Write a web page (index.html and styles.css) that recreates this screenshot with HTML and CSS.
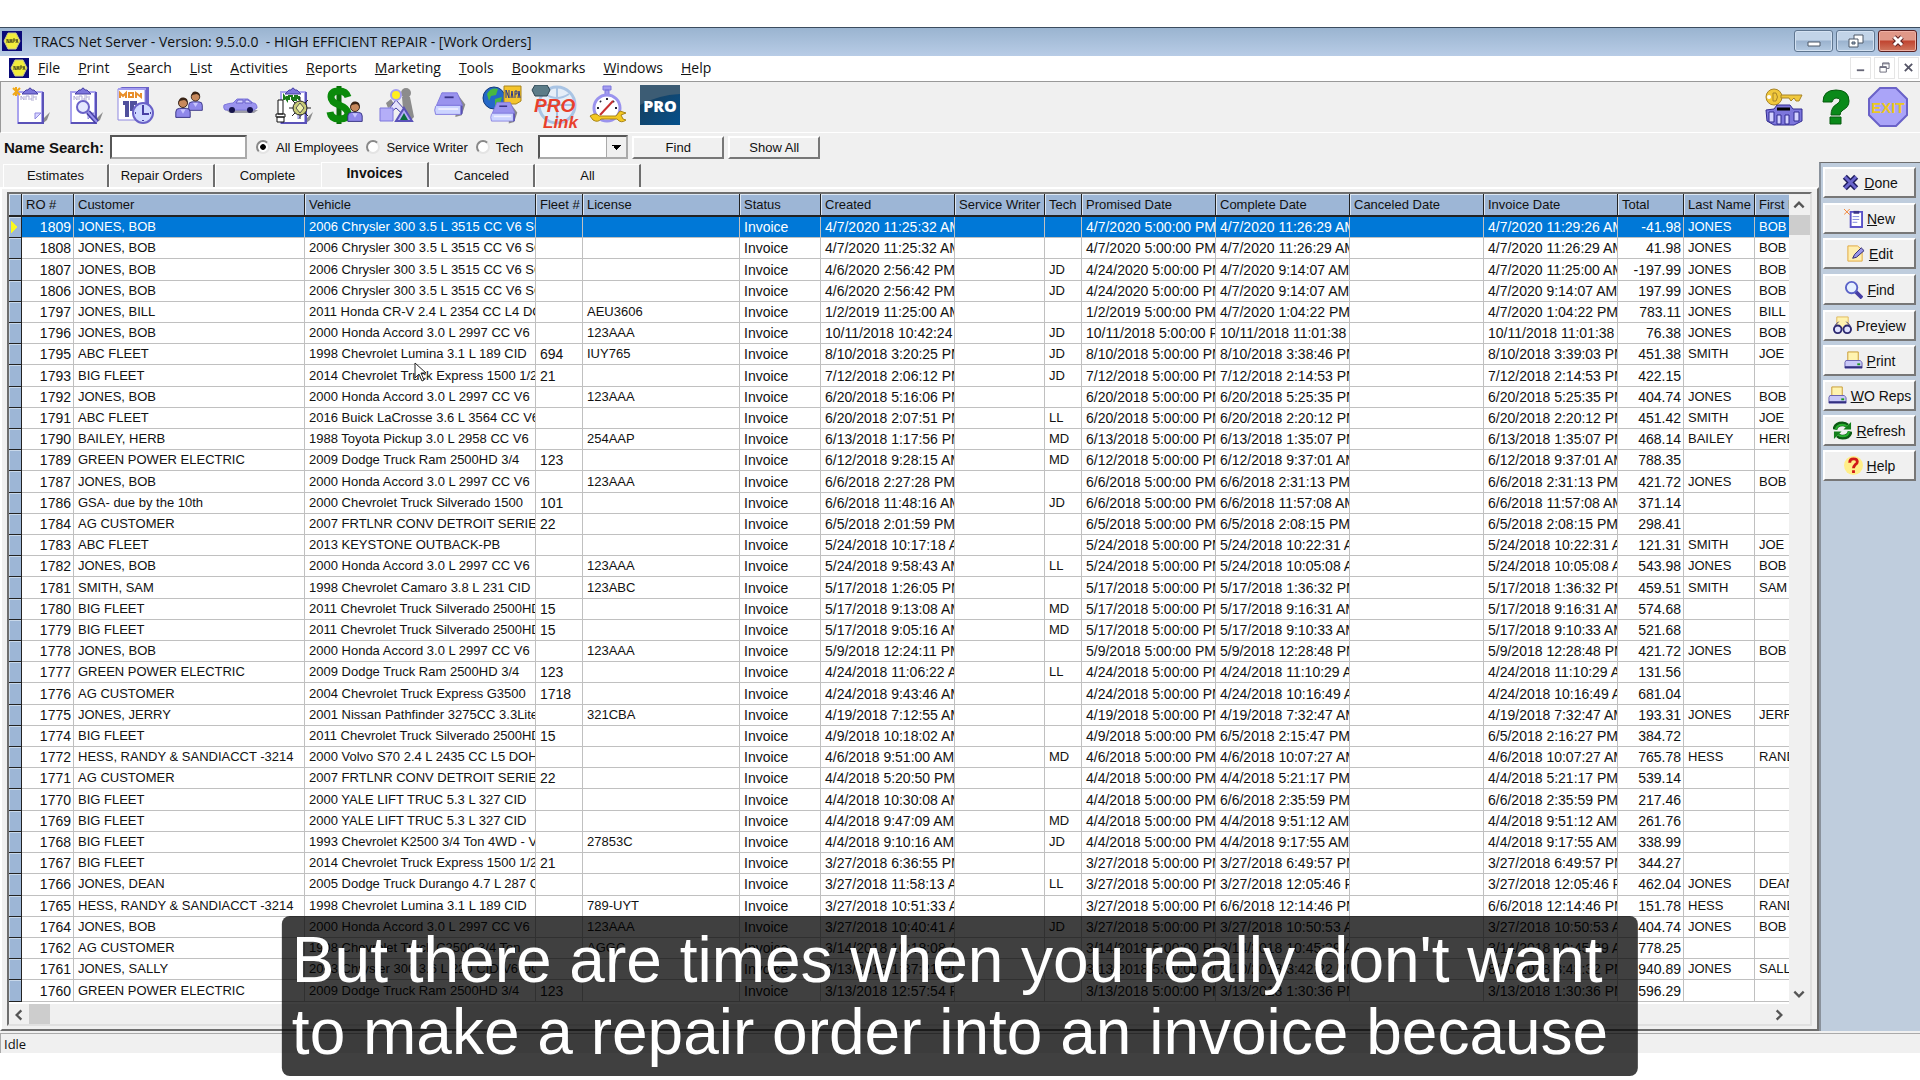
FILE: index.html
```html
<!DOCTYPE html>
<html lang="en">
<head>
  <meta charset="UTF-8" />
  <title>TRACS Net Server - Work Orders</title>
  <link rel="stylesheet" href="styles.css">
</head>
<body>
  <!-- shared icon parts -->
  <svg class="sprites" aria-hidden="true">
    <symbol id="napa" viewBox="0 0 20 20">
      <rect width="20" height="20" fill="#0a0a78"/>
      <path d="M6 2h8l4 8-4 8H6l-4-8z" fill="#f2ee3c" stroke="#c8c890"/>
      <path d="M5 12V8l2 4V8M8 12l1-4 1 4M11 12V8h2v2h-2M14 12l1-4 1 4" fill="none" stroke="#55551c"/>
    </symbol>
    <symbol id="clipboard" viewBox="0 0 40 40">
      <path d="M30 37l10-10-3 8-5 4z" fill="#8c8c8c"/>
      <path d="M8 7h24v31H8z" fill="#fff" stroke="#a9a3ee" stroke-width="2"/>
      <path d="M33 7v31H8" fill="none" stroke="#5a52b8" stroke-width="2"/>
      <path d="M12 9l4-4h2q2-4 4 0h2l4 4z" fill="#7d76dc" stroke="#463ea4"/>
      <path d="M11 15v-4l3 4v-4M16 15v-4h3v4M21 11h3v2h-3v2h3M26 11v4" fill="none" stroke="#b0acd4"/>
      <path d="M25 34v-6h6z" fill="#d8d6ff" stroke="#8f88e0"/>
    </symbol>
    <symbol id="person" viewBox="0 0 20 24">
      <path d="M2 23v-6q0-4 4-4h8q4 0 4 4v6z" fill="#8f88ea" stroke="#2e2a7c"/>
      <path d="M7 14h6l-3 5z" fill="#c9c6ff"/>
      <circle cx="10" cy="7" r="5" fill="#c8895c" stroke="#2b1a10"/>
      <path d="M5 6q1-6 6-5 5 1 4 6-2-4-5-3-3 0-5 2z" fill="#3a2415"/>
    </symbol>
    <symbol id="book" viewBox="0 0 40 32">
      <path d="M28 4l9 12-4 12-7 2z" fill="#8a8a8a"/>
      <path d="M11 3h17l6 14H5z" fill="#9a93ee" stroke="#7d76dc"/>
      <path d="M4 18q-2 4 0 9h28V17H5z" fill="#ccd4ff" stroke="#7d76dc"/>
      <path d="M32 17l2 1v8l-2 2z" fill="#5a52b8"/>
      <path d="M14 8h10" stroke="#3a3488" stroke-width="2"/>
      <path d="M7 21h22" stroke="#eef" stroke-width="2"/>
    </symbol>
    <symbol id="printer" viewBox="0 0 20 20">
      <path d="M4 1h11v9H4z" fill="#fff3b0" stroke="#c89a30"/>
      <path d="M2 10h15l2 2v6H1v-6z" fill="#c9c8f8" stroke="#6660b0"/>
      <path d="M1 17h18" stroke="#333080" stroke-width="2"/>
      <path d="M14 14h3" stroke="#1a9a1a" stroke-width="2"/>
    </symbol>
  </svg>

  <div class="app">
    <header class="titlebar">
      <svg class="app-icon"><use href="#napa"/></svg>
      <h1 class="title">TRACS Net Server - Version: 9.5.0.0&nbsp; - HIGH EFFICIENT REPAIR - [Work Orders]</h1>
      <div class="win-buttons">
        <button class="win-btn" aria-label="Minimize"><svg viewBox="0 0 16 14"><path d="M2 8h12v4H2z" fill="#fff" stroke="#4c5868"/></svg></button>
        <button class="win-btn" aria-label="Restore"><svg viewBox="0 0 16 14"><path d="M6 1h9v8H6z" fill="#fff" stroke="#4c5868"/><path d="M1 5h9v8H1z" fill="#fff" stroke="#4c5868"/><path d="M4 8h3v2H4z" fill="#9fb4cc" stroke="#4c5868"/></svg></button>
        <button class="win-btn win-close" aria-label="Close"><svg viewBox="0 0 16 14"><path d="M4 3l8 8M12 3l-8 8" stroke="#5c2020" stroke-width="5"/><path d="M4 3l8 8M12 3l-8 8" stroke="#fff" stroke-width="3"/></svg></button>
      </div>
    </header>

    <nav class="menubar">
      <svg class="app-icon"><use href="#napa"/></svg>
      <a href="#"><u>F</u>ile</a>
      <a href="#"><u>P</u>rint</a>
      <a href="#"><u>S</u>earch</a>
      <a href="#"><u>L</u>ist</a>
      <a href="#"><u>A</u>ctivities</a>
      <a href="#"><u>R</u>eports</a>
      <a href="#"><u>M</u>arketing</a>
      <a href="#"><u>T</u>ools</a>
      <a href="#"><u>B</u>ookmarks</a>
      <a href="#"><u>W</u>indows</a>
      <a href="#"><u>H</u>elp</a>
      <div class="mdi-buttons">
        <button aria-label="Minimize window"><svg viewBox="0 0 12 12"><path d="M2 9h8" stroke="#667" stroke-width="2"/></svg></button>
        <button aria-label="Restore window"><svg viewBox="0 0 12 12"><path d="M4 5V1h7v6H8M1 5h7v6H1zM1 6h7M4 2h7" fill="none" stroke="#667"/></svg></button>
        <button aria-label="Close window"><svg viewBox="0 0 12 12"><path d="M2 2l8 8M10 2l-8 8" stroke="#556" stroke-width="2"/></svg></button>
      </div>
    </nav>

    <div class="toolbar">
      <div class="tools">
        <button aria-label="New work order"><svg viewBox="0 0 40 40"><use href="#clipboard"/><path d="M3 3l7 7M10 3l-7 7M6 2v9" stroke="#f0a818" stroke-width="2"/></svg></button>
        <button aria-label="Find work order"><svg viewBox="0 0 40 40"><use href="#clipboard"/><path d="M25 27l9 10" stroke="#463ea4" stroke-width="5"/><path d="M25 27l9 10" stroke="#9a93ee" stroke-width="2"/><circle cx="20" cy="22" r="6" fill="#e4e8ff" stroke="#6a62c8" stroke-width="2"/></svg></button>
        <button aria-label="Schedule"><svg viewBox="0 0 40 40">
          <path d="M3 4l4-2h27v29l-4 4z" fill="#6a62c8"/><path d="M3 4h27v31H3z" fill="#fff" stroke="#8f88e0"/>
          <path d="M3 3h28v2H3z" fill="#a49df0"/>
          <path d="M5 13V8l3 3 3-3v5M14 8h4v4h-4zM21 13V8l5 4V8" fill="none" stroke="#e8902c" stroke-width="2"/>
          <path d="M8 18h4v14M22 18h-5v6h4" fill="none" stroke="#50509c" stroke-width="4"/>
          <circle cx="28" cy="28" r="10" fill="#cfd8ff" stroke="#6a62c8" stroke-width="2"/>
          <path d="M28 21v8h6M28 20v1M28 35v1M20 28h1M35 28h1" fill="none" stroke="#463ea4" stroke-width="2"/></svg></button>
        <button aria-label="Customers"><svg viewBox="0 0 40 40"><use href="#person" x="19" y="5" width="17" height="22"/><use href="#person" x="6" y="11" width="18" height="23"/></svg></button>
        <button aria-label="Vehicles"><svg viewBox="0 0 40 40"><path d="M6 25h32l-4 3H10z" fill="#9c9ca8"/><path d="M4 20q5-2 9-2l4-4h11l5 4q4 0 4 5l-3 2H5q-2-2-1-5z" fill="#9a93ee" stroke="#7d76dc"/><path d="M16 18l2-3h5v3zM25 15h3l4 3h-7z" fill="#d4d2ff" stroke="#6a62c8"/><circle cx="12" cy="25" r="3" fill="#16144a"/><circle cx="30" cy="25" r="3" fill="#16144a"/></svg></button>
        <button aria-label="Parts and labor"><svg viewBox="0 0 40 40"><use href="#clipboard"/><path d="M11 15v-4l3 4v-4M16 15v-4h3v4M21 11h3v2h-3v2h3M26 11v4" fill="none" stroke="#1a7a1a" stroke-width="2"/>
          <path d="M5 15h5v14H5zM3 29h9v3H3zM4 32h7v5H4z" fill="#fff" stroke="#111"/>
          <path d="M27 12v22M16 23h22M19 15l16 16M35 15L19 31" stroke="#222"/><circle cx="27" cy="23" r="7" fill="#c9cc78" stroke="#222"/><path d="M27 18l4 5-4 5-4-5z" fill="#eef0a8" stroke="#555"/></svg></button>
        <button aria-label="Accounts receivable"><svg viewBox="0 0 40 40"><path d="M14 1v38" stroke="#0a6e0a" stroke-width="5"/><path d="M23 12q-2-6-9-6-8 0-8 6 0 5 8 8t9 8q0 6-9 6-8 0-9-7" fill="none" stroke="#0a8a0a" stroke-width="7"/><use href="#person" x="21" y="15" width="18" height="23"/></svg></button>
        <button aria-label="Inventory"><svg viewBox="0 0 40 40"><circle cx="29" cy="8" r="5" fill="#8c8c8c"/><path d="M25 12h8l4 20-4 4-7-12z" fill="#8c8c8c"/><path d="M9 18l5-4 3 5-6 4z" fill="#8c8c8c"/><path d="M19 15l9 10 4 10-13-12-6 5-1-4z" fill="#e4e2fa" stroke="#463ea4"/><circle cx="19" cy="10" r="5" fill="#ffee20" stroke="#a49df0" stroke-width="2"/><path d="M3 23h13v13H3z" fill="#b4aef8" stroke="#7d76dc"/><path d="M27 23l8 13H19z" fill="#b4aef8" stroke="#5a52b8" stroke-width="2"/><path d="M27 28l4 7h-8z" fill="#0a6e3a"/></svg></button>
        <button aria-label="Catalog"><svg viewBox="0 0 40 40"><use href="#book" x="2" y="5" width="36" height="29"/></svg></button>
        <button aria-label="NAPA online catalog"><svg viewBox="0 0 40 40"><circle cx="12" cy="13" r="11" fill="#2468c8" stroke="#123a78"/><path d="M5 9q4-7 11-5l-2 6-5 1-2 5zM13 14l7-2-2 7-5 3z" fill="#48b840"/><path d="M22 1h17v15l-5 3H22z" fill="#f4c42c" stroke="#a8841c"/><path d="M24 13V5l3 8V5M29 13l1-7 1 7M33 13V6h2v3h-2M36 13l1-7 1 7" fill="none" stroke="#28368c"/><use href="#book" x="5" y="15" width="34" height="25"/></svg></button>
        <button aria-label="PROLink"><svg class="wide" viewBox="0 0 48 44"><circle cx="26" cy="20" r="18" fill="#e6eef8" stroke="#a9c4e4" stroke-width="3"/><path d="M26 3v34M8 20h36M14 9q12 8 24 0" fill="none" stroke="#a9c4e4" stroke-width="2"/><path d="M4 0h12l3 5-3 6H4L1 5z" fill="#5c7c88" stroke="#2c4450"/><text x="3" y="27" class="logo-pro">PRO</text><text x="12" y="43" class="logo-link">Link</text></svg></button>
        <button aria-label="Time clock"><svg viewBox="0 0 40 40"><path d="M16 1h8v4h-8zM18 5h4v5h-4z" fill="#a49df0" stroke="#7d76dc"/><circle cx="20" cy="23" r="13" fill="#fff" stroke="#9a93ee" stroke-width="3"/><path d="M20 13v2M20 31v2M10 23h2M28 23h2M13 16l1 1M27 16l-1 1" stroke="#223" stroke-width="2"/><path d="M13 30l13-14" stroke="#c83030" stroke-width="2"/><path d="M3 31q6-4 9 0h17l4-5 6 2-5 2 2 4 3 1q-5 4-9-1H14q-3 4-8 1z" fill="#f4c820" stroke="#a88418"/></svg></button>
        <button aria-label="PRO"><svg viewBox="0 0 40 40"><defs><linearGradient id="proBg" x1="0" y1="0" x2="1" y2="1"><stop offset="0" stop-color="#1d3c54"/><stop offset="1" stop-color="#04508c"/></linearGradient></defs><rect width="40" height="40" fill="url(#proBg)"/><path d="M0 0h40v9Q18 10 0 20z" fill="#3c5c74"/><text x="20" y="27" class="logo-badge">PRO</text></svg></button>
      </div>
      <div class="tools-right">
        <button aria-label="Security"><svg viewBox="0 0 40 40"><circle cx="10" cy="10" r="8" fill="#f0c83c" stroke="#a88428"/><path d="M17 8h21l-3 6h-3l-2-3-3 3-2-3h-8z" fill="#f0c83c" stroke="#a88428"/><circle cx="5" cy="10" r="2" fill="#fff"/><path d="M9 6v8h3q3-4 0-8z" fill="none" stroke="#a88428"/><path d="M2 23l8-1 3-4h13l3 4h9v12l-8 4H10l-7-4z" fill="#7d76dc" stroke="#312a90"/><path d="M5 25h5v10H5zM13 28h4v9h-4zM21 28h4v9h-4zM30 25h5v9h-5z" fill="#d4d2ff" stroke="#312a90"/><path d="M13 22h13" stroke="#000" stroke-width="3"/></svg></button>
        <button aria-label="Help"><svg viewBox="0 0 40 40"><path d="M7 15Q7 3 20 3t13 11q0 6-6 9-3 2-3 5h-9q0-8 6-11 3-2 3-4 0-2-4-2-3 0-4 4zM14 30h11v7H14z" fill="#0a8a1a" stroke="#045a0c"/></svg></button>
        <button aria-label="Exit"><svg viewBox="0 0 40 40"><path d="M12 1h16l11 11v16L28 39H12L1 28V12z" fill="#aaa4f8" stroke="#6a62c8" stroke-width="2"/><text x="20" y="26" class="logo-exit">EXIT</text></svg></button>
      </div>
    </div>

    <form class="search" onsubmit="return false">
      <label class="search-label" for="nameSearch">Name Search:</label>
      <input class="search-box" type="text" id="nameSearch" />
      <label class="choice"><input type="radio" name="who" checked /> All Employees</label>
      <label class="choice"><input type="radio" name="who" /> Service Writer</label>
      <label class="choice"><input type="radio" name="who" /> Tech</label>
      <select class="employee" aria-label="Employee"><option></option></select>
      <button class="btn">Find</button>
      <button class="btn">Show All</button>
    </form>

    <div class="work">
      <main class="content">
        <div class="tabs">
          <button class="tab">Estimates</button>
          <button class="tab">Repair Orders</button>
          <button class="tab">Complete</button>
          <button class="tab active">Invoices</button>
          <button class="tab">Canceled</button>
          <button class="tab">All</button>
        </div>
        <div class="panel">
          <div class="grid">
            <div class="grid-body">
              <table>
                <colgroup>
                  <col class="c-mark"><col class="c-ro"><col class="c-customer"><col class="c-vehicle"><col class="c-fleet"><col class="c-license"><col class="c-status"><col class="c-date"><col class="c-writer"><col class="c-tech"><col class="c-date"><col class="c-date"><col class="c-date"><col class="c-date"><col class="c-total"><col class="c-last"><col>
                </colgroup>
                <thead>
                  <tr>
                    <th></th><th>RO #</th><th>Customer</th><th>Vehicle</th><th>Fleet #</th><th>License</th><th>Status</th><th>Created</th><th>Service Writer</th><th>Tech</th><th>Promised Date</th><th>Complete Date</th><th>Canceled Date</th><th>Invoice Date</th><th>Total</th><th>Last Name</th><th>First Name</th>
                  </tr>
                </thead>
                <tbody id="orders"></tbody>
              </table>
            </div>
            <div class="vscroll">
              <button aria-label="Scroll up"><svg viewBox="0 0 12 12"><path d="M2 8l4-4 4 4" fill="none" stroke="#555" stroke-width="2"/></svg></button>
              <div class="thumb"></div>
              <button class="scroll-end" aria-label="Scroll down"><svg viewBox="0 0 12 12"><path d="M2 4l4 4 4-4" fill="none" stroke="#555" stroke-width="2"/></svg></button>
            </div>
            <div class="hscroll">
              <button aria-label="Scroll left"><svg viewBox="0 0 12 12"><path d="M8 2L4 6l4 4" fill="none" stroke="#555" stroke-width="2"/></svg></button>
              <div class="thumb"></div>
              <button class="scroll-end" aria-label="Scroll right"><svg viewBox="0 0 12 12"><path d="M4 2l4 4-4 4" fill="none" stroke="#555" stroke-width="2"/></svg></button>
            </div>
          </div>
        </div>
      </main>

      <aside class="side">
        <div class="side-group">
          <button><svg viewBox="0 0 20 20"><path d="M4 4l12 12M16 4L4 16" stroke="#1c1a5c" stroke-width="6"/><path d="M4 4l12 12M16 4L4 16" stroke="#6b66cc" stroke-width="3"/></svg><span><u>D</u>one</span></button>
        </div>
        <div class="side-group">
          <button><svg viewBox="0 0 20 20"><path d="M7 3h12v16H7z" fill="#fff" stroke="#5a52c8" stroke-width="2"/><path d="M10 2h6v3h-6z" fill="#3a3488"/><path d="M9 8h7M9 11h7M9 14h5" stroke="#7d86dc"/><path d="M0 0l6 6M6 0L0 6" stroke="#f08030"/></svg><span><u>N</u>ew</span></button>
          <button><svg viewBox="0 0 20 20"><path d="M2 2h10l5 4v12H2z" fill="#ffeeb0" stroke="#e0a83c"/><path d="M7 15l2-4 7-7 3 3-8 7z" fill="#9a96e8" stroke="#2c2870"/></svg><span><u>E</u>dit</span></button>
        </div>
        <div class="side-group">
          <button><svg viewBox="0 0 20 20"><path d="M12 12l7 7" stroke="#463ea4" stroke-width="4"/><circle cx="8" cy="8" r="6" fill="#e6f0ff" stroke="#5a62c8" stroke-width="2"/></svg><span><u>F</u>ind</span></button>
        </div>
        <div class="side-group">
          <button><svg viewBox="0 0 20 20"><path d="M4 1h12v12H4z" fill="#fff3b0" stroke="#e0b85c"/><circle cx="5" cy="14" r="4" fill="#dfe2ff" stroke="#2c2870" stroke-width="2"/><circle cx="15" cy="14" r="4" fill="#dfe2ff" stroke="#2c2870" stroke-width="2"/><path d="M2 10l4-4M18 10l-4-4" stroke="#2c2870"/></svg><span>Pre<u>v</u>iew</span></button>
          <button><svg viewBox="0 0 20 20"><use href="#printer"/></svg><span><u>P</u>rint</span></button>
          <button><svg viewBox="0 0 20 20"><use href="#printer"/></svg><span><u>W</u>O Reps</span></button>
          <button><svg viewBox="0 0 20 20"><path d="M2 9q1-6 8-6 3 0 5 2M18 11q-1 6-8 6-3 0-5-2" fill="none" stroke="#0c5a14" stroke-width="5"/><path d="M3 9q1-5 7-5 3 0 5 2M17 11q-1 5-7 5-3 0-5-2" fill="none" stroke="#28b030" stroke-width="2"/><path d="M19 1v8h-8zM1 19v-8h8z" fill="#14801c"/></svg><span><u>R</u>efresh</span></button>
          <button><svg viewBox="0 0 20 20"><circle cx="10" cy="10" r="10" fill="#ffee88"/><path d="M6 7q0-4 4-4t4 3q0 2-2 3-2 2-2 4M10 15v3" fill="none" stroke="#d01818" stroke-width="3"/></svg><span><u>H</u>elp</span></button>
        </div>
      </aside>
    </div>

    <footer class="statusbar">Idle</footer>
  </div>

  <svg class="pointer" viewBox="0 0 12 20"><path d="M1 1v15l4-4 3 7 2-1-3-7h5z" fill="#fff" stroke="#222"/></svg>
  <p class="caption">But there are times when you really don't want<br>to make a repair order into an invoice because</p>

  <script>
    // ro, customer, vehicle, fleet, license, created, tech, promised, complete, invoiced, total, last, first
    const orders = [
      [1809, 'JONES, BOB', '2006 Chrysler 300 3.5 L 3515 CC V6 SOHC', '', '', '4/7/2020 11:25:32 AM', '', '4/7/2020', '4/7/2020 11:26:29 AM', '4/7/2020 11:29:26 AM', '-41.98', 'JONES', 'BOB'],
      [1808, 'JONES, BOB', '2006 Chrysler 300 3.5 L 3515 CC V6 SOHC', '', '', '4/7/2020 11:25:32 AM', '', '4/7/2020', '4/7/2020 11:26:29 AM', '4/7/2020 11:26:29 AM', '41.98', 'JONES', 'BOB'],
      [1807, 'JONES, BOB', '2006 Chrysler 300 3.5 L 3515 CC V6 SOHC', '', '', '4/6/2020 2:56:42 PM', 'JD', '4/24/2020', '4/7/2020 9:14:07 AM', '4/7/2020 11:25:00 AM', '-197.99', 'JONES', 'BOB'],
      [1806, 'JONES, BOB', '2006 Chrysler 300 3.5 L 3515 CC V6 SOHC', '', '', '4/6/2020 2:56:42 PM', 'JD', '4/24/2020', '4/7/2020 9:14:07 AM', '4/7/2020 9:14:07 AM', '197.99', 'JONES', 'BOB'],
      [1797, 'JONES, BILL', '2011 Honda CR-V 2.4 L 2354 CC L4 DOHC', '', 'AEU3606', '1/2/2019 11:25:00 AM', '', '1/2/2019', '4/7/2020 1:04:22 PM', '4/7/2020 1:04:22 PM', '783.11', 'JONES', 'BILL'],
      [1796, 'JONES, BOB', '2000 Honda Accord 3.0 L 2997 CC V6', '', '123AAA', '10/11/2018 10:42:24 AM', 'JD', '10/11/2018', '10/11/2018 11:01:38 AM', '10/11/2018 11:01:38 AM', '76.38', 'JONES', 'BOB'],
      [1795, 'ABC FLEET', '1998 Chevrolet Lumina 3.1 L 189 CID', '694', 'IUY765', '8/10/2018 3:20:25 PM', 'JD', '8/10/2018', '8/10/2018 3:38:46 PM', '8/10/2018 3:39:03 PM', '451.38', 'SMITH', 'JOE'],
      [1793, 'BIG FLEET', '2014 Chevrolet Truck Express 1500 1/2', '21', '', '7/12/2018 2:06:12 PM', 'JD', '7/12/2018', '7/12/2018 2:14:53 PM', '7/12/2018 2:14:53 PM', '422.15', '', ''],
      [1792, 'JONES, BOB', '2000 Honda Accord 3.0 L 2997 CC V6', '', '123AAA', '6/20/2018 5:16:06 PM', '', '6/20/2018', '6/20/2018 5:25:35 PM', '6/20/2018 5:25:35 PM', '404.74', 'JONES', 'BOB'],
      [1791, 'ABC FLEET', '2016 Buick LaCrosse 3.6 L 3564 CC V6', '', '', '6/20/2018 2:07:51 PM', 'LL', '6/20/2018', '6/20/2018 2:20:12 PM', '6/20/2018 2:20:12 PM', '451.42', 'SMITH', 'JOE'],
      [1790, 'BAILEY, HERB', '1988 Toyota Pickup 3.0 L 2958 CC V6', '', '254AAP', '6/13/2018 1:17:56 PM', 'MD', '6/13/2018', '6/13/2018 1:35:07 PM', '6/13/2018 1:35:07 PM', '468.14', 'BAILEY', 'HERB'],
      [1789, 'GREEN POWER ELECTRIC', '2009 Dodge Truck Ram 2500HD 3/4', '123', '', '6/12/2018 9:28:15 AM', 'MD', '6/12/2018', '6/12/2018 9:37:01 AM', '6/12/2018 9:37:01 AM', '788.35', '', ''],
      [1787, 'JONES, BOB', '2000 Honda Accord 3.0 L 2997 CC V6', '', '123AAA', '6/6/2018 2:27:28 PM', '', '6/6/2018', '6/6/2018 2:31:13 PM', '6/6/2018 2:31:13 PM', '421.72', 'JONES', 'BOB'],
      [1786, 'GSA- due by the 10th', '2000 Chevrolet Truck Silverado 1500', '101', '', '6/6/2018 11:48:16 AM', 'JD', '6/6/2018', '6/6/2018 11:57:08 AM', '6/6/2018 11:57:08 AM', '371.14', '', ''],
      [1784, 'AG CUSTOMER', '2007 FRTLNR CONV DETROIT SERIES', '22', '', '6/5/2018 2:01:59 PM', '', '6/5/2018', '6/5/2018 2:08:15 PM', '6/5/2018 2:08:15 PM', '298.41', '', ''],
      [1783, 'ABC FLEET', '2013 KEYSTONE OUTBACK-PB', '', '', '5/24/2018 10:17:18 AM', '', '5/24/2018', '5/24/2018 10:22:31 AM', '5/24/2018 10:22:31 AM', '121.31', 'SMITH', 'JOE'],
      [1782, 'JONES, BOB', '2000 Honda Accord 3.0 L 2997 CC V6', '', '123AAA', '5/24/2018 9:58:43 AM', 'LL', '5/24/2018', '5/24/2018 10:05:08 AM', '5/24/2018 10:05:08 AM', '543.98', 'JONES', 'BOB'],
      [1781, 'SMITH, SAM', '1998 Chevrolet Camaro 3.8 L 231 CID', '', '123ABC', '5/17/2018 1:26:05 PM', '', '5/17/2018', '5/17/2018 1:36:32 PM', '5/17/2018 1:36:32 PM', '459.51', 'SMITH', 'SAM'],
      [1780, 'BIG FLEET', '2011 Chevrolet Truck Silverado 2500HD', '15', '', '5/17/2018 9:13:08 AM', 'MD', '5/17/2018', '5/17/2018 9:16:31 AM', '5/17/2018 9:16:31 AM', '574.68', '', ''],
      [1779, 'BIG FLEET', '2011 Chevrolet Truck Silverado 2500HD', '15', '', '5/17/2018 9:05:16 AM', 'MD', '5/17/2018', '5/17/2018 9:10:33 AM', '5/17/2018 9:10:33 AM', '521.68', '', ''],
      [1778, 'JONES, BOB', '2000 Honda Accord 3.0 L 2997 CC V6', '', '123AAA', '5/9/2018 12:24:11 PM', '', '5/9/2018', '5/9/2018 12:28:48 PM', '5/9/2018 12:28:48 PM', '421.72', 'JONES', 'BOB'],
      [1777, 'GREEN POWER ELECTRIC', '2009 Dodge Truck Ram 2500HD 3/4', '123', '', '4/24/2018 11:06:22 AM', 'LL', '4/24/2018', '4/24/2018 11:10:29 AM', '4/24/2018 11:10:29 AM', '131.56', '', ''],
      [1776, 'AG CUSTOMER', '2004 Chevrolet Truck Express G3500', '1718', '', '4/24/2018 9:43:46 AM', '', '4/24/2018', '4/24/2018 10:16:49 AM', '4/24/2018 10:16:49 AM', '681.04', '', ''],
      [1775, 'JONES, JERRY', '2001 Nissan Pathfinder 3275CC 3.3Liter', '', '321CBA', '4/19/2018 7:12:55 AM', '', '4/19/2018', '4/19/2018 7:32:47 AM', '4/19/2018 7:32:47 AM', '193.31', 'JONES', 'JERRY'],
      [1774, 'BIG FLEET', '2011 Chevrolet Truck Silverado 2500HD', '15', '', '4/9/2018 10:18:02 AM', '', '4/9/2018', '6/5/2018 2:15:47 PM', '6/5/2018 2:16:27 PM', '384.72', '', ''],
      [1772, 'HESS, RANDY & SANDIACCT -3214', '2000 Volvo S70 2.4 L 2435 CC L5 DOHC', '', '', '4/6/2018 9:51:00 AM', 'MD', '4/6/2018', '4/6/2018 10:07:27 AM', '4/6/2018 10:07:27 AM', '765.78', 'HESS', 'RANDY'],
      [1771, 'AG CUSTOMER', '2007 FRTLNR CONV DETROIT SERIES', '22', '', '4/4/2018 5:20:50 PM', '', '4/4/2018', '4/4/2018 5:21:17 PM', '4/4/2018 5:21:17 PM', '539.14', '', ''],
      [1770, 'BIG FLEET', '2000 YALE LIFT TRUC 5.3 L 327 CID', '', '', '4/4/2018 10:30:08 AM', '', '4/4/2018', '6/6/2018 2:35:59 PM', '6/6/2018 2:35:59 PM', '217.46', '', ''],
      [1769, 'BIG FLEET', '2000 YALE LIFT TRUC 5.3 L 327 CID', '', '', '4/4/2018 9:47:09 AM', 'MD', '4/4/2018', '4/4/2018 9:51:12 AM', '4/4/2018 9:51:12 AM', '261.76', '', ''],
      [1768, 'BIG FLEET', '1993 Chevrolet K2500 3/4 Ton 4WD - V8', '', '27853C', '4/4/2018 9:10:16 AM', 'JD', '4/4/2018', '4/4/2018 9:17:55 AM', '4/4/2018 9:17:55 AM', '338.99', '', ''],
      [1767, 'BIG FLEET', '2014 Chevrolet Truck Express 1500 1/2', '21', '', '3/27/2018 6:36:55 PM', '', '3/27/2018', '3/27/2018 6:49:57 PM', '3/27/2018 6:49:57 PM', '344.27', '', ''],
      [1766, 'JONES, DEAN', '2005 Dodge Truck Durango 4.7 L 287 CID', '', '', '3/27/2018 11:58:13 AM', 'LL', '3/27/2018', '3/27/2018 12:05:46 PM', '3/27/2018 12:05:46 PM', '462.04', 'JONES', 'DEAN'],
      [1765, 'HESS, RANDY & SANDIACCT -3214', '1998 Chevrolet Lumina 3.1 L 189 CID', '', '789-UYT', '3/27/2018 10:51:33 AM', '', '3/27/2018', '6/6/2018 12:14:46 PM', '6/6/2018 12:14:46 PM', '151.78', 'HESS', 'RANDY'],
      [1764, 'JONES, BOB', '2000 Honda Accord 3.0 L 2997 CC V6', '', '123AAA', '3/27/2018 10:40:41 AM', 'JD', '3/27/2018', '3/27/2018 10:50:53 AM', '3/27/2018 10:50:53 AM', '404.74', 'JONES', 'BOB'],
      [1762, 'AG CUSTOMER', '1998 Chevrolet Truck C2500 3/4 Ton', '', 'AGGC', '3/14/2018 10:18:08 AM', '', '3/14/2018', '3/14/2018 10:45:39 AM', '3/14/2018 10:45:39 AM', '778.25', '', ''],
      [1761, 'JONES, SALLY', '2013 Chrysler 300 3.6 L 220 CID V6 DOHC', '', '', '3/13/2018 1:37:21 PM', '', '3/13/2018', '8/10/2018 3:42:22 PM', '8/10/2018 3:42:32 PM', '940.89', 'JONES', 'SALLY'],
      [1760, 'GREEN POWER ELECTRIC', '2009 Dodge Truck Ram 2500HD 3/4', '123', '', '3/13/2018 12:57:54 PM', '', '3/13/2018', '3/13/2018 1:30:36 PM', '3/13/2018 1:30:36 PM', '596.29', '', '']
    ];

    const tbody = document.getElementById('orders');
    orders.forEach((o, i) => {
      const [ro, customer, vehicle, fleet, license, created, tech, promised, complete, invoiced, total, last, first] = o;
      const row = document.createElement('tr');
      if (i === 0) row.className = 'selected';
      row.innerHTML = `
        <td class="mark"></td>
        <td class="num">${ro}</td>
        <td class="name">${customer.replace('&', '&amp;')}</td>
        <td class="name">${vehicle}</td>
        <td>${fleet}</td>
        <td class="name">${license}</td>
        <td>Invoice</td>
        <td>${created}</td>
        <td></td>
        <td class="name">${tech}</td>
        <td>${promised} 5:00:00 PM</td>
        <td>${complete}</td>
        <td></td>
        <td>${invoiced}</td>
        <td class="num">${total}</td>
        <td class="name">${last}</td>
        <td class="name">${first}</td>
      `;
      tbody.appendChild(row);
    });
  </script>
</body>
</html>
```

FILE: styles.css
```css
:root {
  --face: #f0f0f0;
  --header-blue: #9db6d6;
  --side-blue: #bfcddd;
  --select: #0078d7;
  --line: #c0c0c0;
  --dark: #6e6e6e;
}
* {
  box-sizing: border-box;
}
body {
  margin: 0;
  height: 100vh;
  padding: 27px 0;
  display: flex;
  background: white;
  color: #111;
  font-family: "Liberation Sans", Arial, sans-serif;
  font-size: 13px;
}
button, input, select {
  font: inherit;
  color: inherit;
}
button {
  padding: 0;
  border: none;
  background: none;
}
.sprites {
  position: absolute;
  width: 0;
  height: 0;
}
.app {
  flex: 1;
  min-width: 0;
  display: flex;
  flex-direction: column;
  background: var(--face);
}

/* title and menu */
.titlebar {
  height: 29px;
  display: flex;
  align-items: center;
  gap: 11px;
  padding: 0 3px 2px 2px;
  border-top: 1px solid #3c4c5e;
  background: linear-gradient(#9ab4d0, #b8cce6);
}
.app-icon {
  width: 20px;
  height: 20px;
}
.title {
  margin: 0;
  font: 14px "Open Sans", sans-serif;
}
.win-buttons {
  margin-left: auto;
  display: flex;
  gap: 3px;
}
.win-btn {
  width: 39px;
  height: 22px;
  display: flex;
  align-items: center;
  justify-content: center;
  border: 1px solid #5f7690;
  border-radius: 3px;
  box-shadow: inset 0 0 0 1px #d4e2f2;
  background: linear-gradient(#c2d4e8 45%, #9ab2ce 50%, #b4cae2);
}
.win-btn svg {
  width: 16px;
  height: 14px;
}
.win-close {
  border-color: #5a2020;
  box-shadow: inset 0 0 0 1px #eeb0a4;
  background: linear-gradient(#e09888 45%, #c04430 50%, #d07860);
}
.menubar {
  height: 25px;
  display: flex;
  align-items: center;
  gap: 18px;
  padding: 0 1px 2px 9px;
  background: white;
  font: 14px "Open Sans", sans-serif;
}
.menubar .app-icon {
  margin-right: -9px;
}
.menubar a {
  color: inherit;
  text-decoration: none;
}
.mdi-buttons {
  margin-left: auto;
  display: flex;
  gap: 3px;
}
.mdi-buttons button {
  width: 21px;
  height: 22px;
  border: 1px solid #e6e6e6;
}
.mdi-buttons svg {
  width: 11px;
  height: 11px;
}

/* icon toolbar */
.toolbar {
  height: 52px;
  display: flex;
  justify-content: space-between;
  align-items: center;
  padding: 0 5px 0 3px;
  border-top: 1px solid #999;
  border-left: 1px solid #999;
  border-bottom: 1px solid white;
}
.tools {
  width: 682px;
  display: grid;
  grid-template-columns: repeat(13, 1fr);
}
.tools button, .tools-right button {
  display: flex;
  justify-content: center;
}
.tools svg, .tools-right svg {
  width: 40px;
  height: 40px;
}
.tools .wide {
  width: 48px;
  height: 44px;
}
.tools-right {
  display: flex;
  gap: 12px;
  padding-right: 7px;
}
.logo-pro {
  font: italic bold 19px "Liberation Sans", sans-serif;
  fill: #e8402c;
}
.logo-link {
  font: italic bold 17px "Liberation Sans", sans-serif;
  fill: #e8402c;
}
.logo-badge {
  font: 800 16px "Open Sans", sans-serif;
  fill: white;
  text-anchor: middle;
}
.logo-exit {
  font: bold 15px "Liberation Sans", sans-serif;
  fill: #ecc820;
  text-anchor: middle;
}

/* search row */
.search {
  height: 29px;
  display: flex;
  align-items: center;
  padding: 0 0 1px 4px;
}
.search-label {
  width: 106px;
  font-size: 15px;
  font-weight: bold;
}
.search-box {
  width: 137px;
  height: 24px;
  margin-right: 9px;
  border: 2px inset #aaa;
  background: white;
}
.choice {
  display: flex;
  align-items: center;
  gap: 6px;
  margin-right: 8px;
}
.choice input {
  appearance: none;
  width: 14px;
  height: 14px;
  margin: 0;
  border: 2px solid;
  border-color: #888 #e4e4e4 #e4e4e4 #888;
  border-radius: 50%;
  background: white;
}
.choice input:checked {
  background: radial-gradient(#000 35%, white 45%);
}
.employee {
  appearance: none;
  width: 90px;
  height: 24px;
  margin-left: 7px;
  margin-right: 4px;
  border: 2px inset #aaa;
  background:
    linear-gradient(45deg, transparent 50%, #000 50%) right 9px center / 5px 5px no-repeat,
    linear-gradient(-45deg, transparent 50%, #000 50%) right 5px center / 5px 5px no-repeat,
    linear-gradient(to left, var(--face) 19px, #aaa 19px, #aaa 20px, white 20px);
}
.btn {
  width: 92px;
  height: 23px;
  margin-right: 4px;
  border: 2px solid;
  border-color: white #777 #777 white;
}

/* tabs and grid */
.work {
  flex: 1;
  min-height: 0;
  display: flex;
}
.content {
  flex: 1;
  min-width: 0;
  display: flex;
  flex-direction: column;
}
.tabs {
  display: flex;
  align-items: flex-end;
  height: 25px;
  padding-left: 3px;
}
.tab {
  width: 106px;
  height: 23px;
  padding-bottom: 2px;
  border-top: 1px solid white;
  border-right: 2px solid var(--dark);
  border-left: 1px solid white;
}
.tab:nth-child(3) {
  border-right-color: transparent;
}
.tab.active {
  width: 108px;
  height: 25px;
  padding-bottom: 4px;
  font-size: 14px;
  font-weight: bold;
}
.panel {
  flex: 1;
  min-height: 0;
  display: flex;
  padding: 3px 5px;
  border: 2px solid;
  border-color: white var(--dark) var(--dark) white;
}
.grid {
  flex: 1;
  min-width: 0;
  display: grid;
  grid-template-columns: 1fr 21px;
  grid-template-rows: 1fr 20px;
  border: 2px solid;
  border-color: var(--dark) #e0e0e0 #e0e0e0 var(--dark);
}
.grid-body {
  min-width: 0;
  min-height: 0;
  overflow: hidden;
  padding-bottom: 2px;
  background: white;
}
table {
  width: 100%;
  height: 100%;
  table-layout: fixed;
  border-spacing: 0;
}
.c-mark { width: 13px; }
.c-ro { width: 52px; }
.c-customer, .c-vehicle { width: 231px; }
.c-fleet { width: 47px; }
.c-license { width: 157px; }
.c-status { width: 81px; }
.c-date { width: 134px; }
.c-writer { width: 90px; }
.c-tech { width: 37px; }
.c-total { width: 66px; }
.c-last { width: 71px; }
th, td {
  padding: 0 0 0 4px;
  overflow: hidden;
  white-space: nowrap;
  text-align: left;
  line-height: 16px;
}
th {
  height: 23px;
  font-weight: normal;
  background: var(--header-blue);
  border-right: 1px solid #222;
  border-bottom: 2px solid #222;
  box-shadow: inset 1px 1px #dce6f2;
}
td {
  font-size: 14px;
  border-right: 1px solid var(--line);
  border-bottom: 1px solid var(--line);
}
th:last-child, td:last-child {
  border-right: none;
}
.name {
  font-size: 13px;
}
.num {
  padding-right: 2px;
  text-align: right;
}
.mark {
  background: var(--header-blue);
  border-right: 1px solid #222;
  border-bottom: 1px solid #222;
  box-shadow: inset 1px 1px #c8d8ea;
}
.selected td:not(.mark) {
  color: white;
  background: var(--select);
}
.selected .mark {
  background: linear-gradient(to top right, #f8f820 50%, transparent 50%) 2px 4px / 7px 6px no-repeat,
    linear-gradient(to bottom right, #f8f820 50%, transparent 50%) 2px 10px / 7px 6px no-repeat,
    var(--header-blue);
}
.vscroll, .hscroll {
  display: flex;
  background: var(--face);
}
.vscroll {
  flex-direction: column;
}
.vscroll button, .hscroll button {
  width: 20px;
  height: 21px;
  display: flex;
  align-items: center;
  justify-content: center;
}
.vscroll svg, .hscroll svg {
  width: 14px;
  height: 14px;
}
.thumb {
  width: 21px;
  height: 20px;
  background: #cdcdcd;
}
.vscroll .scroll-end {
  margin-top: auto;
}
.hscroll .scroll-end {
  margin-left: auto;
}

/* action buttons */
.side {
  width: 101px;
  display: flex;
  flex-direction: column;
  gap: 5px;
  padding: 4px 4px 0 2px;
  border-top: 1px solid var(--dark);
  border-left: 2px solid #8a929c;
  background: var(--side-blue);
}
.side-group {
  display: flex;
  flex-direction: column;
  gap: 4px;
}
.side-group button {
  height: 31px;
  display: flex;
  align-items: center;
  justify-content: center;
  gap: 4px;
  border: 2px solid;
  border-color: white #777 #777 white;
  background: var(--face);
  font-size: 14px;
}
.side-group svg {
  flex: none;
  width: 19px;
  height: 19px;
}
.statusbar {
  height: 20px;
  margin-top: 2px;
  padding-left: 3px;
  border-top: 1px solid #aaa;
  border-left: 1px solid #aaa;
  font: 13px/21px "Open Sans", sans-serif;
}

/* overlays */
.pointer {
  position: absolute;
  left: 414px;
  top: 362px;
  width: 12px;
  height: 20px;
}
.caption {
  position: absolute;
  left: 50%;
  bottom: 4px;
  transform: translateX(-50%);
  margin: 0;
  padding: 8px 30px 8px 10px;
  border-radius: 8px;
  background: rgba(0, 0, 0, 0.75);
  color: white;
  font-size: 64px;
  line-height: 72px;
  white-space: nowrap;
}
```
